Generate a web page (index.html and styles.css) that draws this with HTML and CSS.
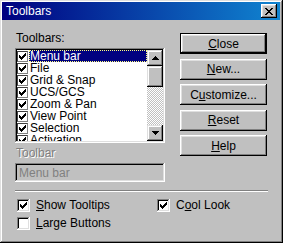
FILE: index.html
```html
<!DOCTYPE html>
<html lang="en">
<head>
  <meta charset="UTF-8">
  <title>Toolbars</title>
  <link rel="stylesheet" href="styles.css">
</head>
<body>
  <!-- Glifos reutilizados -->
  <svg class="defs" width="0" height="0">
    <defs>
      <symbol id="check" viewBox="0 0 7 7">
        <path d="M0 2h1v3h-1z M1 3h1v3h-1z M2 4h1v3h-1z M3 3h1v3h-1z M4 2h1v3h-1z M5 1h1v3h-1z M6 0h1v3h-1z"/>
      </symbol>
      <symbol id="arrow" viewBox="0 0 7 4">
        <path d="M3 0h1v1h1v1h1v1h1v1h-7v-1h1v-1h1v-1h1z"/>
      </symbol>
    </defs>
  </svg>

  <div class="window">
    <div class="titlebar">
      <span class="title">Toolbars</span>
      <div class="title-close">
        <svg width="8" height="7" viewBox="0 0 8 7" shape-rendering="crispEdges">
          <path d="M0 0h2v1h-2z M6 0h2v1h-2z M1 1h2v1h-2z M5 1h2v1h-2z M2 2h4v1h-4z M3 3h2v1h-2z M2 4h4v1h-4z M1 5h2v1h-2z M5 5h2v1h-2z M0 6h2v1h-2z M6 6h2v1h-2z"/>
        </svg>
      </div>
    </div>

    <div class="content">
      <div class="top">
        <!-- Coluna da lista -->
        <div class="left">
          <div class="label">Toolbars:</div>
          <div class="listbox">
            <ul class="items">
              <li class="item selected"><span class="mini-box"><svg shape-rendering="crispEdges"><use href="#check"/></svg></span><span class="text">Menu bar</span></li>
              <li class="item"><span class="mini-box"><svg shape-rendering="crispEdges"><use href="#check"/></svg></span><span class="text">File</span></li>
              <li class="item"><span class="mini-box"><svg shape-rendering="crispEdges"><use href="#check"/></svg></span><span class="text">Grid &amp; Snap</span></li>
              <li class="item"><span class="mini-box"><svg shape-rendering="crispEdges"><use href="#check"/></svg></span><span class="text">UCS/GCS</span></li>
              <li class="item"><span class="mini-box"><svg shape-rendering="crispEdges"><use href="#check"/></svg></span><span class="text">Zoom &amp; Pan</span></li>
              <li class="item"><span class="mini-box"><svg shape-rendering="crispEdges"><use href="#check"/></svg></span><span class="text">View Point</span></li>
              <li class="item"><span class="mini-box"><svg shape-rendering="crispEdges"><use href="#check"/></svg></span><span class="text">Selection</span></li>
              <li class="item"><span class="mini-box"><svg shape-rendering="crispEdges"><use href="#check"/></svg></span><span class="text">Activation</span></li>
            </ul>
            <div class="scrollbar">
              <div class="sb-btn"><svg class="arrow" shape-rendering="crispEdges"><use href="#arrow"/></svg></div>
              <div class="sb-thumb"></div>
              <div class="sb-track"></div>
              <div class="sb-btn down"><svg class="arrow" shape-rendering="crispEdges"><use href="#arrow"/></svg></div>
            </div>
          </div>
          <div class="label disabled">Toolbar</div>
          <div class="edit">Menu bar</div>
        </div>

        <!-- Botões -->
        <div class="buttons">
          <div class="btn default"><u>C</u>lose</div>
          <div class="btn"><u>N</u>ew...</div>
          <div class="btn">C<u>u</u>stomize...</div>
          <div class="btn"><u>R</u>eset</div>
          <div class="btn"><u>H</u>elp</div>
        </div>
      </div>

      <div class="separator"></div>

      <!-- Opções -->
      <div class="options">
        <div class="option"><span class="box"><svg shape-rendering="crispEdges"><use href="#check"/></svg></span><span><u>S</u>how Tooltips</span></div>
        <div class="option"><span class="box"><svg shape-rendering="crispEdges"><use href="#check"/></svg></span><span>C<u>o</u>ol Look</span></div>
        <div class="option"><span class="box"></span><span><u>L</u>arge Buttons</span></div>
      </div>
    </div>
  </div>
</body>
</html>
```

FILE: styles.css
```css
/* Reset básico */
* {
  margin: 0;
  padding: 0;
  box-sizing: border-box;
}

body {
  font-family: 'Liberation Sans', Arial, sans-serif;
  font-size: 12px;
  line-height: 14px;
  color: #000;
  background: #c0c0c0;
}

.defs {
  position: absolute;
}

/* Janela */
.window {
  width: 283px;
  height: 243px;
  padding: 2px 3px 3px 2px;
  background: #c0c0c0;
  box-shadow: inset -1px -1px #000, inset 1px 1px #dfdfdf,
              inset -2px -2px #808080, inset 2px 2px #fff;
}

.titlebar {
  height: 18px;
  display: flex;
  align-items: center;
  justify-content: space-between;
  padding: 0 3px 0 4px;
  background: linear-gradient(90deg, #000080, #1084d0);
  color: #fff;
}

.title {
  font-size: 12px;
}

.title-close {
  width: 16px;
  height: 14px;
  display: flex;
  align-items: center;
  justify-content: center;
  background: #c0c0c0;
  box-shadow: inset -1px -1px #000, inset 1px 1px #fff,
              inset -2px -2px #808080, inset 2px 2px #dfdfdf;
}

.title-close svg {
  display: block;
  fill: #000;
}

/* Conteúdo */
.content {
  padding: 11px 12px 0 13px;
}

.top {
  display: flex;
  gap: 15px;
}

.left {
  width: 150px;
}

.label {
  height: 14px;
  padding-left: 1px;
  margin-bottom: 3px;
}

.label.disabled {
  margin-top: 3px;
  color: #808080;
  text-shadow: 1px 1px #fff;
}

/* Lista com caixas de seleção */
.listbox {
  height: 95px;
  display: flex;
  padding: 2px;
  background: #fff;
  box-shadow: inset -1px -1px #fff, inset 1px 1px #808080,
              inset -2px -2px #dfdfdf, inset 2px 2px #000;
}

.items {
  list-style: none;
  flex: 1;
  overflow: hidden;
}

.item {
  height: 12px;
  display: flex;
  align-items: center;
  line-height: 12px;
}

.mini-box {
  width: 11px;
  height: 11px;
  margin-right: 1px;
  display: flex;
  align-items: center;
  justify-content: center;
  background: #fff;
  border: 1px solid #808080;
  border-top-color: #404040;
  border-left-color: #404040;
}

.mini-box svg,
.box svg {
  width: 7px;
  height: 7px;
  fill: #000;
  display: block;
}

.item .text {
  flex: 1;
  height: 12px;
  padding-left: 1px;
}

.item.selected .text {
  background: #000080;
  color: #fff;
  outline: 1px dotted #ffff80;
  outline-offset: -1px;
}

/* Barra de rolagem */
.scrollbar {
  width: 16px;
  display: flex;
  flex-direction: column;
}

.sb-btn,
.sb-thumb {
  height: 16px;
  display: flex;
  align-items: center;
  justify-content: center;
  background: #c0c0c0;
  box-shadow: inset -1px -1px #000, inset 1px 1px #dfdfdf,
              inset -2px -2px #808080, inset 2px 2px #fff;
}

.sb-thumb {
  height: 21px;
}

.sb-track {
  flex: 1;
  background: repeating-conic-gradient(#c0c0c0 0 25%, #fff 0 50%) 0 0 / 2px 2px;
}

.arrow {
  width: 7px;
  height: 4px;
  fill: #000;
  display: block;
}

.sb-btn.down .arrow {
  transform: rotate(180deg);
}

/* Campo desabilitado */
.edit {
  height: 19px;
  padding: 3px 4px;
  color: #808080;
  box-shadow: inset -1px -1px #fff, inset 1px 1px #808080,
              inset -2px -2px #dfdfdf, inset 2px 2px #000;
}

/* Botões */
.buttons {
  width: 87px;
  margin-top: 2px;
  display: flex;
  flex-direction: column;
  gap: 4.5px;
}

.btn {
  height: 21px;
  display: flex;
  align-items: center;
  justify-content: center;
  background: #c0c0c0;
  box-shadow: inset -1px -1px #000, inset 1px 1px #fff,
              inset -2px -2px #808080, inset 2px 2px #dfdfdf;
}

.btn.default {
  border: 1px solid #000;
}

/* Separador */
.separator {
  margin-top: 8px;
  height: 2px;
  border-top: 1px solid #808080;
  border-bottom: 1px solid #fff;
}

/* Opções */
.options {
  margin-top: 4px;
  padding-left: 2px;
  display: grid;
  grid-template-columns: 140px auto;
}

.option {
  height: 18px;
  display: flex;
  align-items: center;
  gap: 6px;
}

.box {
  width: 13px;
  height: 13px;
  display: flex;
  align-items: center;
  justify-content: center;
  background: #fff;
  box-shadow: inset -1px -1px #fff, inset 1px 1px #808080,
              inset -2px -2px #dfdfdf, inset 2px 2px #000;
}
```
